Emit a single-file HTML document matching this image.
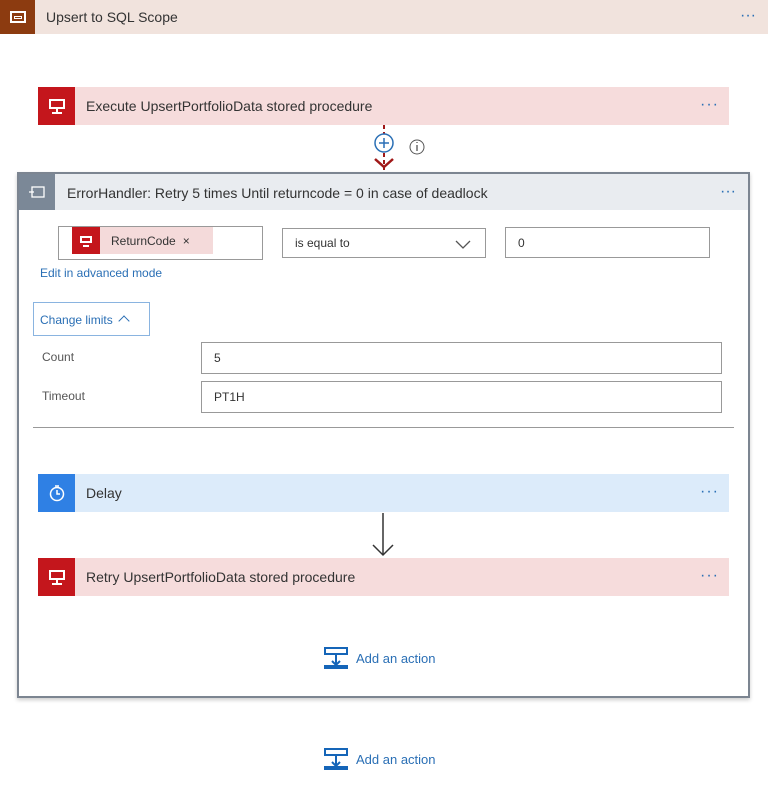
<!DOCTYPE html>
<html><head><meta charset="utf-8"><style>
*{box-sizing:border-box;margin:0;padding:0}
body{width:768px;height:794px;background:#fff;font-family:"Liberation Sans",sans-serif;position:relative;overflow:hidden;color:#333}
.a{position:absolute}
.card{position:absolute;left:38px;width:691px;height:38px;display:flex;align-items:center;font-size:14px}
.card .ic{width:37px;height:100%;display:flex;align-items:center;justify-content:center}
.card .t{padding-left:11px;flex:1}
.dots{position:absolute;right:10px;top:9px;color:#2a6fb5;font-size:16px;letter-spacing:1px}
.inp{position:absolute;border:1px solid #999;background:#fff;font-size:12px;padding-left:12px;display:flex;align-items:center}
.lbl{position:absolute;font-size:12px;color:#555}
.link{color:#2a6fb5}
</style></head><body>
<div class="a" style="left:0;top:0;width:768px;height:34px;background:#f1e3dd"></div>
<div class="a" style="left:0;top:0;width:35px;height:34px;background:#8c3b10;display:flex;align-items:center;justify-content:center"><div style="width:16px;height:12px;border:2px solid #fff;display:flex;align-items:center;justify-content:center"><div style="width:8px;height:3px;border:1px solid #fff"></div></div></div>
<div class="a" style="left:46px;top:9px;font-size:14px">Upsert to SQL Scope</div>
<div class="a" style="left:740px;top:7px;color:#2a6fb5;font-size:16px">···</div>

<svg class="a" style="left:0;top:0" width="768" height="794">
<line x1="384" y1="125" x2="384" y2="170" stroke="#a01818" stroke-width="2" stroke-dasharray="4,3"/>
<circle cx="384" cy="143" r="9" fill="#fff" stroke="#2a6fb5" stroke-width="1.5"/>
<path d="M379 143h10M384 138v10" stroke="#2a6fb5" stroke-width="1.5"/>
<path d="M375 159l9 8 9-8" fill="none" stroke="#a01818" stroke-width="2.5"/>
<circle cx="417" cy="147" r="7" fill="none" stroke="#555" stroke-width="1"/>
<path d="M417 145v6M417 142v1" stroke="#555" stroke-width="1.3"/>
<line x1="383" y1="513" x2="383" y2="555" stroke="#333" stroke-width="1.5"/>
<path d="M373 545l10 10 10-10" fill="none" stroke="#333" stroke-width="1.5"/>
<g fill="none" stroke="#1565b8" stroke-width="2"><path d="M325 648h22v6h-22z"/><path d="M336 654v11M332 661l4 4 4-4"/></g><rect x="324" y="665" width="24" height="4" fill="#1565b8"/>
<g fill="none" stroke="#1565b8" stroke-width="2"><path d="M325 749h22v6h-22z"/><path d="M336 755v11M332 762l4 4 4-4"/></g><rect x="324" y="766" width="24" height="4" fill="#1565b8"/>
</svg>

<div class="card" style="top:87px;background:#f6dcdc"><div class="ic" style="background:#c4161c"><svg width="18" height="16"><rect x="1" y="1" width="16" height="10" fill="#fff"/><rect x="3" y="3" width="12" height="6" fill="#c4161c"/><rect x="8" y="11" width="2" height="3" fill="#fff"/><rect x="4" y="14" width="10" height="2" fill="#fff"/></svg></div><div class="t">Execute UpsertPortfolioData stored procedure</div><span class="dots">···</span></div>

<div class="a" style="left:17px;top:172px;width:733px;height:526px;border:2px solid #7c8591;box-shadow:0 2px 4px rgba(0,0,0,.2)"></div>
<div class="a" style="left:19px;top:174px;width:729px;height:36px;background:#e9ecf0"></div>
<div class="a" style="left:19px;top:174px;width:36px;height:36px;background:#7b8897;display:flex;align-items:center;justify-content:center"><svg width="16" height="12"><rect x="3" y="1" width="12" height="10" fill="none" stroke="#fff" stroke-width="1.3"/><path d="M0 6h5" stroke="#fff" stroke-width="1.3"/></svg></div>
<div class="a" style="left:67px;top:185px;font-size:14px">ErrorHandler: Retry 5 times Until returncode = 0 in case of deadlock</div>
<div class="a" style="left:720px;top:183px;color:#2a6fb5;font-size:16px">···</div>

<div class="inp" style="left:58px;top:226px;width:205px;height:34px;padding:0"></div>
<div class="a" style="left:72px;top:227px;width:141px;height:27px;background:#f4dada;font-size:12px;display:flex;align-items:center"><div style="width:28px;height:27px;background:#c4161c;display:flex;align-items:center;justify-content:center"><svg width="14" height="12"><rect x="1" y="1" width="12" height="7" fill="#fff"/><rect x="3" y="3" width="8" height="3" fill="#c4161c"/><rect x="4" y="10" width="6" height="2" fill="#fff"/></svg></div><span style="padding-left:11px">ReturnCode</span><span style="padding-left:7px">×</span></div>
<div class="inp" style="left:282px;top:228px;width:204px;height:30px">is equal to<svg class="a" style="left:172px;top:10px" width="16" height="10"><path d="M1 2l7 7 7-7" fill="none" stroke="#555" stroke-width="1.3"/></svg></div>
<div class="inp" style="left:505px;top:227px;width:205px;height:31px">0</div>
<div class="a link" style="left:40px;top:266px;font-size:12px">Edit in advanced mode</div>
<div class="a link" style="left:33px;top:302px;width:117px;height:34px;border:1px solid #8ab4e0;font-size:12px;padding:10px 0 0 6px">Change limits <span style="display:inline-block;width:8px;height:8px;border-left:1.3px solid #2a6fb5;border-top:1.3px solid #2a6fb5;transform:rotate(45deg);margin-left:4px;position:relative;top:1px"></span></div>
<div class="lbl" style="left:42px;top:350px">Count</div>
<div class="inp" style="left:201px;top:342px;width:521px;height:32px">5</div>
<div class="lbl" style="left:42px;top:389px">Timeout</div>
<div class="inp" style="left:201px;top:381px;width:521px;height:32px">PT1H</div>
<div class="a" style="left:33px;top:427px;width:701px;height:1px;background:#999"></div>

<div class="card" style="top:474px;background:#dcebfa"><div class="ic" style="background:#2f80e4"><svg width="18" height="18"><circle cx="9" cy="10" r="6.5" fill="none" stroke="#fff" stroke-width="1.5"/><path d="M9 6v4h3M7 2h4" fill="none" stroke="#fff" stroke-width="1.5"/></svg></div><div class="t">Delay</div><span class="dots">···</span></div>
<div class="card" style="top:558px;background:#f6dcdc"><div class="ic" style="background:#c4161c"><svg width="18" height="16"><rect x="1" y="1" width="16" height="10" fill="#fff"/><rect x="3" y="3" width="12" height="6" fill="#c4161c"/><rect x="8" y="11" width="2" height="3" fill="#fff"/><rect x="4" y="14" width="10" height="2" fill="#fff"/></svg></div><div class="t">Retry UpsertPortfolioData stored procedure</div><span class="dots">···</span></div>

<div class="a link" style="left:356px;top:651px;font-size:13px">Add an action</div>
<div class="a link" style="left:356px;top:752px;font-size:13px">Add an action</div>
</body></html>
